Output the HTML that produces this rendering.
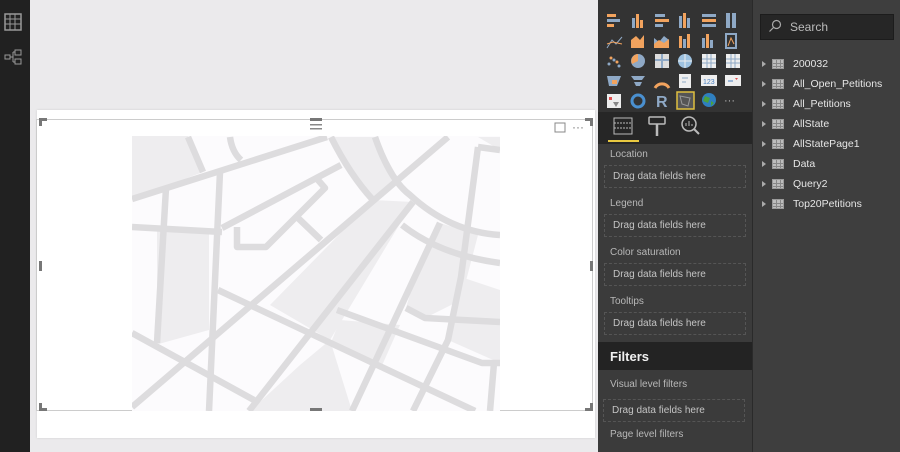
<!DOCTYPE html>
<html><head><meta charset="utf-8"><style>
*{margin:0;padding:0;box-sizing:border-box}
body{width:900px;height:452px;overflow:hidden;background:#ebeaec;font-family:"Liberation Sans",sans-serif;position:relative}
.a{position:absolute}
.lbl{position:absolute;left:610px;color:#b8b8b8;font-size:10px}
.well{position:absolute;left:604px;width:142px;height:23px;border:1px dashed #555;color:#c4c4c4;font-size:10px;padding:5px 0 0 8px}
.f{position:absolute;left:760px;color:#e6e6e6;font-size:10.5px}
.ti{position:absolute;left:772px;width:12px;height:10px;background:#bdbdbd;border:1px solid #9a9a9a;
background-image:linear-gradient(90deg,transparent 3px,#888 3px,#888 4px,transparent 4px,transparent 7px,#888 7px,#888 8px,transparent 8px),linear-gradient(transparent 3px,#888 3px,#888 4px,transparent 4px,transparent 6px,#888 6px,#888 7px,transparent 7px)}
.tr{position:absolute;left:762px;width:0;height:0;border-left:4px solid #aaa;border-top:3px solid transparent;border-bottom:3px solid transparent}
</style></head><body>
<div class="a" style="left:0;top:0;width:30px;height:452px;background:#212121"></div>
<svg class="a" style="left:4px;top:13px" width="18" height="18"><rect x="1" y="1" width="16" height="16" fill="none" stroke="#999" stroke-width="1.5"/><path d="M1 6H17M1 11H17M6 1V17M11 1V17" stroke="#999"/></svg>
<svg class="a" style="left:4px;top:48px" width="18" height="18"><rect x="1" y="7" width="5" height="4" fill="none" stroke="#999"/><rect x="11" y="2" width="6" height="5" fill="none" stroke="#999"/><rect x="11" y="11" width="6" height="5" fill="none" stroke="#999"/><path d="M6 9H9M9 4V14M9 4H11M9 14H11" stroke="#999"/></svg>

<div class="a" style="left:37px;top:110px;width:558px;height:328px;background:#fff;box-shadow:0 0 2px #ccc"></div>
<div class="a" style="left:36px;top:119px;width:557px;height:292px;border:1px solid #ccc"></div>
<svg class="a" style="left:0;top:0" width="600" height="452">
<defs><clipPath id="c"><rect x="132" y="136" width="368" height="275"/></clipPath></defs>
<rect x="132" y="136" width="368" height="275" fill="#fcfbfd"/>
<g clip-path="url(#c)">
<g fill="#eeedef">
<polygon points="132,136 188,136 203,172 132,199"/>
<polygon points="157,230 209,232 209,330 155,345 157,290"/>
<polygon points="331,137 375,137 400,182 373,200"/>
<polygon points="373,200 413,202 330,340 270,305"/>
<polygon points="300,365 330,340 352,411 250,411"/>
<polygon points="440,223 478,235 461,300 425,318 406,308 420,260"/>
<polygon points="461,277 500,290 500,363 448,340"/>
<polygon points="478,137 500,137 500,150"/>
<polygon points="340,320 400,325 380,370 330,345"/>
</g>
<g stroke="#dddcde" stroke-width="6.5" fill="none" stroke-linejoin="round">
<path d="M132 199L327 137"/>
<path d="M132 227L222 232"/>
<path d="M166 188L157 343"/>
<path d="M220 172L209 411"/>
<path d="M222 228L341 165"/>
<path d="M331 137Q350 175 373 200"/>
<path d="M375 137Q390 180 410 195Q450 232 500 235"/>
<path d="M132 407L448 137"/>
<path d="M413 202L249 411"/>
<path d="M132 333L254 400"/>
<path d="M218 290L475 411"/>
<path d="M440 223L352 411"/>
<path d="M478 147L461 277L448 340L413 411"/>
<path d="M402 225Q440 255 500 263"/>
<path d="M406 308L425 318L500 322"/>
<path d="M337 310L482 363L500 363"/>
<path d="M298 218L321 240"/>
<path d="M237 227L237 247L266 247L325 188L318 180"/>
<path d="M494 363L490 411"/>
<path d="M230 137Q232 152 241 160"/>
<path d="M188 137L203 172"/>
<path d="M478 147L500 150"/>
</g></g>
<g fill="#777"><rect x="39" y="118" width="8" height="3"/><rect x="39" y="118" width="3" height="8"/>
<rect x="585" y="118" width="8" height="3"/><rect x="590" y="118" width="3" height="8"/>
<rect x="39" y="408" width="8" height="3"/><rect x="39" y="403" width="3" height="8"/>
<rect x="585" y="408" width="8" height="3"/><rect x="590" y="403" width="3" height="8"/>
<rect x="310" y="118" width="12" height="3"/><rect x="310" y="408" width="12" height="3"/>
<rect x="39" y="261" width="3" height="10"/><rect x="590" y="261" width="3" height="10"/></g>
<rect x="310" y="124" width="12" height="1.5" fill="#888"/><rect x="310" y="128" width="12" height="1.5" fill="#888"/>
<rect x="555" y="123" width="10" height="9" fill="none" stroke="#888"/>
<text x="572" y="131" fill="#777" font-size="12" font-family="Liberation Sans">···</text>
</svg>

<div class="a" style="left:598px;top:0;width:154px;height:452px;background:#3b3b3b"></div>
<div class="a" style="left:598px;top:0;width:154px;height:112px;background:#333"></div>
<svg class="a" style="left:598px;top:0" width="154" height="112">
<g>
<rect x="9" y="14" width="9" height="3" fill="#f2a35e"/><rect x="9" y="19" width="13" height="3" fill="#8fa9c6"/><rect x="9" y="24" width="7" height="3" fill="#f2a35e"/>
<rect x="34" y="18" width="3" height="10" fill="#8fa9c6"/><rect x="38" y="14" width="3" height="14" fill="#f2a35e"/><rect x="42" y="20" width="3" height="8" fill="#f2a35e"/>
<rect x="57" y="14" width="10" height="3" fill="#8fa9c6"/><rect x="57" y="19" width="14" height="3" fill="#f2a35e"/><rect x="57" y="24" width="8" height="3" fill="#8fa9c6"/>
<rect x="81" y="16" width="3" height="12" fill="#8fa9c6"/><rect x="85" y="13" width="3" height="15" fill="#f2a35e"/><rect x="89" y="18" width="3" height="10" fill="#8fa9c6"/>
<rect x="104" y="14" width="14" height="3" fill="#8fa9c6"/><rect x="104" y="19" width="14" height="3" fill="#f2a35e"/><rect x="104" y="24" width="14" height="3" fill="#8fa9c6"/>
<rect x="128" y="13" width="4" height="15" fill="#8fa9c6"/><rect x="134" y="13" width="4" height="15" fill="#8fa9c6"/>
<path d="M9 48L14 40L18 44L24 37" stroke="#8fa9c6" fill="none"/><path d="M9 44L15 42L24 44" stroke="#f2a35e" fill="none"/>
<path d="M33 48V40L38 36L42 40L46 35V48Z" fill="#f2a35e"/>
<path d="M56 48V38L61 42L66 36L71 40V48Z" fill="#8fa9c6"/><path d="M56 44L61 40L66 43L71 39V48H56Z" fill="#f2a35e"/>
<rect x="81" y="36" width="3" height="12" fill="#f2a35e"/><rect x="85" y="39" width="3" height="9" fill="#8fa9c6"/><rect x="89" y="34" width="3" height="14" fill="#f2a35e"/>
<rect x="104" y="38" width="3" height="10" fill="#8fa9c6"/><rect x="108" y="34" width="3" height="14" fill="#f2a35e"/><rect x="112" y="40" width="3" height="8" fill="#8fa9c6"/>
<rect x="128" y="34" width="10" height="14" fill="none" stroke="#8fa9c6" stroke-width="2"/><path d="M130 46L133 38L136 44" stroke="#f2a35e" fill="none"/>
<g fill="#8fa9c6"><circle cx="11" cy="64" r="1.5"/><circle cx="16" cy="60" r="1.5"/><circle cx="21" cy="66" r="1.5"/></g><g fill="#f2a35e"><circle cx="13" cy="58" r="1.5"/><circle cx="19" cy="62" r="1.5"/></g>
<circle cx="40" cy="61" r="7" fill="#8fa9c6"/><path d="M40 61V54A7 7 0 0 0 34 64Z" fill="#f2a35e"/>
<rect x="57" y="54" width="14" height="14" fill="#ddd"/><path d="M57 60H71M64 54V68" stroke="#8fa9c6" stroke-width="2"/>
<circle cx="87" cy="61" r="7" fill="#9ec2e0"/><path d="M80 61H94M87 54V68" stroke="#eee"/>
<rect x="104" y="54" width="14" height="14" fill="#eee"/><path d="M104 59H118M104 63H118M109 54V68M113 54V68" stroke="#8fa9c6"/>
<rect x="128" y="54" width="14" height="14" fill="#eee"/><path d="M128 59H142M128 63H142M133 54V68M137 54V68" stroke="#8fa9c6"/>
<path d="M9 76H23L19 86H11Z" fill="#8fa9c6"/><rect x="14" y="80" width="5" height="4" fill="#f2a35e"/>
<path d="M33 76H47L44 80H36ZM36 82H44L42 86H38Z" fill="#8fa9c6"/>
<path d="M57 88A8 8 0 0 1 71 88" stroke="#f2a35e" stroke-width="3" fill="none"/>
<rect x="81" y="74" width="12" height="14" fill="#eee"/><path d="M84 78H90M84 82H88" stroke="#8fa9c6"/>
<rect x="103" y="75" width="16" height="11" fill="#eee"/><text x="105" y="84" font-size="7" fill="#4a80c0" font-family="Liberation Sans">123</text>
<rect x="127" y="75" width="16" height="11" fill="#eee"/><path d="M130 81H135" stroke="#4a80c0"/><path d="M137 78L140 78L138.5 80Z" fill="#e05050"/>
<rect x="9" y="94" width="14" height="14" fill="#eee"/><path d="M15 102L21 102L18 107Z" fill="#888"/><rect x="11" y="97" width="3" height="3" fill="#e05050"/>
<circle cx="40" cy="101" r="6" fill="none" stroke="#4a90d0" stroke-width="3"/>
<text x="58" y="107" font-size="16" font-weight="bold" fill="#8fa9c6" font-family="Liberation Sans">R</text>
<rect x="79" y="92" width="17" height="17" fill="#555" stroke="#e0c040" stroke-width="1.5"/><path d="M82 96L92 98L90 106L84 104Z" fill="none" stroke="#999"/>
<circle cx="111" cy="100" r="7" fill="#2f7fc0"/><path d="M107 96L112 98L110 103L105 101Z" fill="#4aa040"/><path d="M113 101L116 103L113 106Z" fill="#4aa040"/>
<text x="126" y="104" font-size="11" fill="#bbb" font-family="Liberation Sans">···</text>
</g></svg>
<div class="a" style="left:598px;top:112px;width:154px;height:32px;background:#262626"></div>
<svg class="a" style="left:598px;top:112px" width="154" height="34">
<rect x="16" y="6" width="18" height="16" fill="none" stroke="#bbb"/><path d="M16 11H34M16 16H34" stroke="#bbb" stroke-dasharray="2 1"/>
<rect x="10" y="28" width="31" height="2" fill="#e8c840"/>
<rect x="51" y="5" width="16" height="7" rx="1" fill="none" stroke="#bbb" stroke-width="1.5"/><path d="M59 12V16M59 16V24" stroke="#bbb" stroke-width="2.5"/>
<circle cx="91" cy="12" r="7" fill="none" stroke="#bbb" stroke-width="1.5"/><path d="M96 17L101 22" stroke="#bbb" stroke-width="2"/><path d="M88 14V11M91 14V9M94 14V12" stroke="#bbb"/>
</svg>
<div class="lbl" style="top:149px">Location</div>
<div class="well" style="top:165px">Drag data fields here</div>
<div class="lbl" style="top:198px">Legend</div>
<div class="well" style="top:214px">Drag data fields here</div>
<div class="lbl" style="top:247px">Color saturation</div>
<div class="well" style="top:263px">Drag data fields here</div>
<div class="lbl" style="top:296px">Tooltips</div>
<div class="well" style="top:312px">Drag data fields here</div>
<div class="a" style="left:598px;top:342px;width:154px;height:28px;background:#232323;color:#f0f0f0;font-size:13px;font-weight:bold;padding:7px 0 0 12px">Filters</div>
<div class="lbl" style="top:379px">Visual level filters</div>
<div class="well" style="top:399px;left:603px">Drag data fields here</div>
<div class="lbl" style="top:429px">Page level filters</div>

<div class="a" style="left:752px;top:0;width:148px;height:452px;background:#3e3e3e;border-left:1px solid #2a2a2a"></div>
<div class="a" style="left:760px;top:14px;width:134px;height:26px;background:#262626;border:1px solid #1c1c1c"></div>
<svg class="a" style="left:768px;top:19px" width="14" height="14"><circle cx="8.5" cy="5.5" r="4" fill="none" stroke="#aaa" stroke-width="1.2"/><path d="M5.5 8.5L1.5 12.5" stroke="#aaa" stroke-width="1.2"/></svg>
<div class="a" style="left:790px;top:20px;color:#bbb;font-size:12px">Search</div>
<div class="tr" style="top:61px"></div><div class="ti" style="top:59px"></div><div class="f" style="left:793px;top:58px">200032</div>
<div class="tr" style="top:81px"></div><div class="ti" style="top:79px"></div><div class="f" style="left:793px;top:78px">All_Open_Petitions</div>
<div class="tr" style="top:101px"></div><div class="ti" style="top:99px"></div><div class="f" style="left:793px;top:98px">All_Petitions</div>
<div class="tr" style="top:121px"></div><div class="ti" style="top:119px"></div><div class="f" style="left:793px;top:118px">AllState</div>
<div class="tr" style="top:141px"></div><div class="ti" style="top:139px"></div><div class="f" style="left:793px;top:138px">AllStatePage1</div>
<div class="tr" style="top:161px"></div><div class="ti" style="top:159px"></div><div class="f" style="left:793px;top:158px">Data</div>
<div class="tr" style="top:181px"></div><div class="ti" style="top:179px"></div><div class="f" style="left:793px;top:178px">Query2</div>
<div class="tr" style="top:201px"></div><div class="ti" style="top:199px"></div><div class="f" style="left:793px;top:198px">Top20Petitions</div>
</body></html>
